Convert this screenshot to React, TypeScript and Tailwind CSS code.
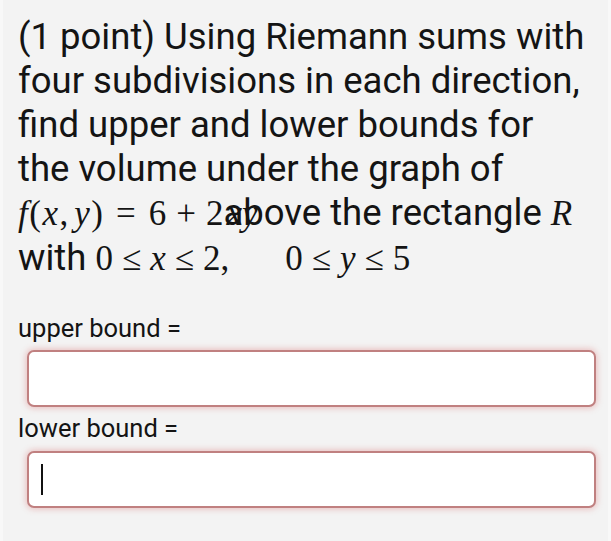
const mathFont = { fontFamily: '"Liberation Serif", "DejaVu Serif", serif' };

function M({ children, italic = false, className = '' }: { children: React.ReactNode; italic?: boolean; className?: string }) {
  return (
    <span className={`${italic ? 'italic' : ''} ${className}`} style={mathFont}>
      {children}
    </span>
  );
}

function AnswerBox({ caret = false }: { caret?: boolean }) {
  return (
    <div className="ml-[9px] mr-[12px] h-[57px] rounded-[7px] border-2 border-[#c08080] bg-white shadow-[0_0_6px_1px_rgba(214,90,90,0.35)] flex items-center px-[12px]">
      {caret && <div className="w-[2px] h-[31px] bg-[#111]" />}
    </div>
  );
}

export default function App() {
  return (
    <div className="w-[611px] h-[541px] bg-[#f8f8f8] flex" style={{ fontFamily: 'Roboto, "Noto Sans", sans-serif' }}>
      <div className="flex-1 mx-[3px] bg-[#f3f3f3] pl-[15px] pt-[15px] text-[#141414]">
        <p className="w-[575px] text-[36.5px] leading-[44px]">
          (1 point) Using Riemann sums with four subdivisions in each direction, find upper and lower bounds for the
          volume under the graph of
          <br />
          <span className="text-[35px] whitespace-nowrap">
            <M italic className="tracking-[1.5px]">f</M>
            <M className="tracking-[1.5px]">(</M>
            <M italic className="tracking-[1.5px]">x</M>
            <M className="mr-[6px]">,</M>
            <M italic className="tracking-[1.5px]">y</M>
            <M>)</M>
            <M className="mx-[13px]">=</M>
            <M>6</M>
            <M className="mx-[10px]">+</M>
            <M>2</M>
            <span className="inline-block w-0 whitespace-nowrap ml-[3px] mr-[-3px]">
              <M italic>xy</M>
            </span>
          </span>
          above the rectangle{' '}
          <span className="text-[35px]">
            <M italic>R</M>
          </span>
          <br />
          with{' '}
          <span className="text-[35px] whitespace-nowrap">
            <M>0</M>
            <M className="mx-[9px]">≤</M>
            <M italic>x</M>
            <M className="mx-[9px]">≤</M>
            <M>2,</M>
            <span className="inline-block w-[56px]" />
            <M>0</M>
            <M className="mx-[9px]">≤</M>
            <M italic>y</M>
            <M className="mx-[9px]">≤</M>
            <M>5</M>
          </span>
        </p>

        <div className="mt-[32px] text-[25.5px] leading-[30px]">upper bound =</div>
        <div className="mt-[7px]">
          <AnswerBox />
        </div>
        <div className="mt-[6px] text-[25.5px] leading-[30px]">lower bound =</div>
        <div className="mt-[8px]">
          <AnswerBox caret />
        </div>
      </div>
    </div>
  );
}
